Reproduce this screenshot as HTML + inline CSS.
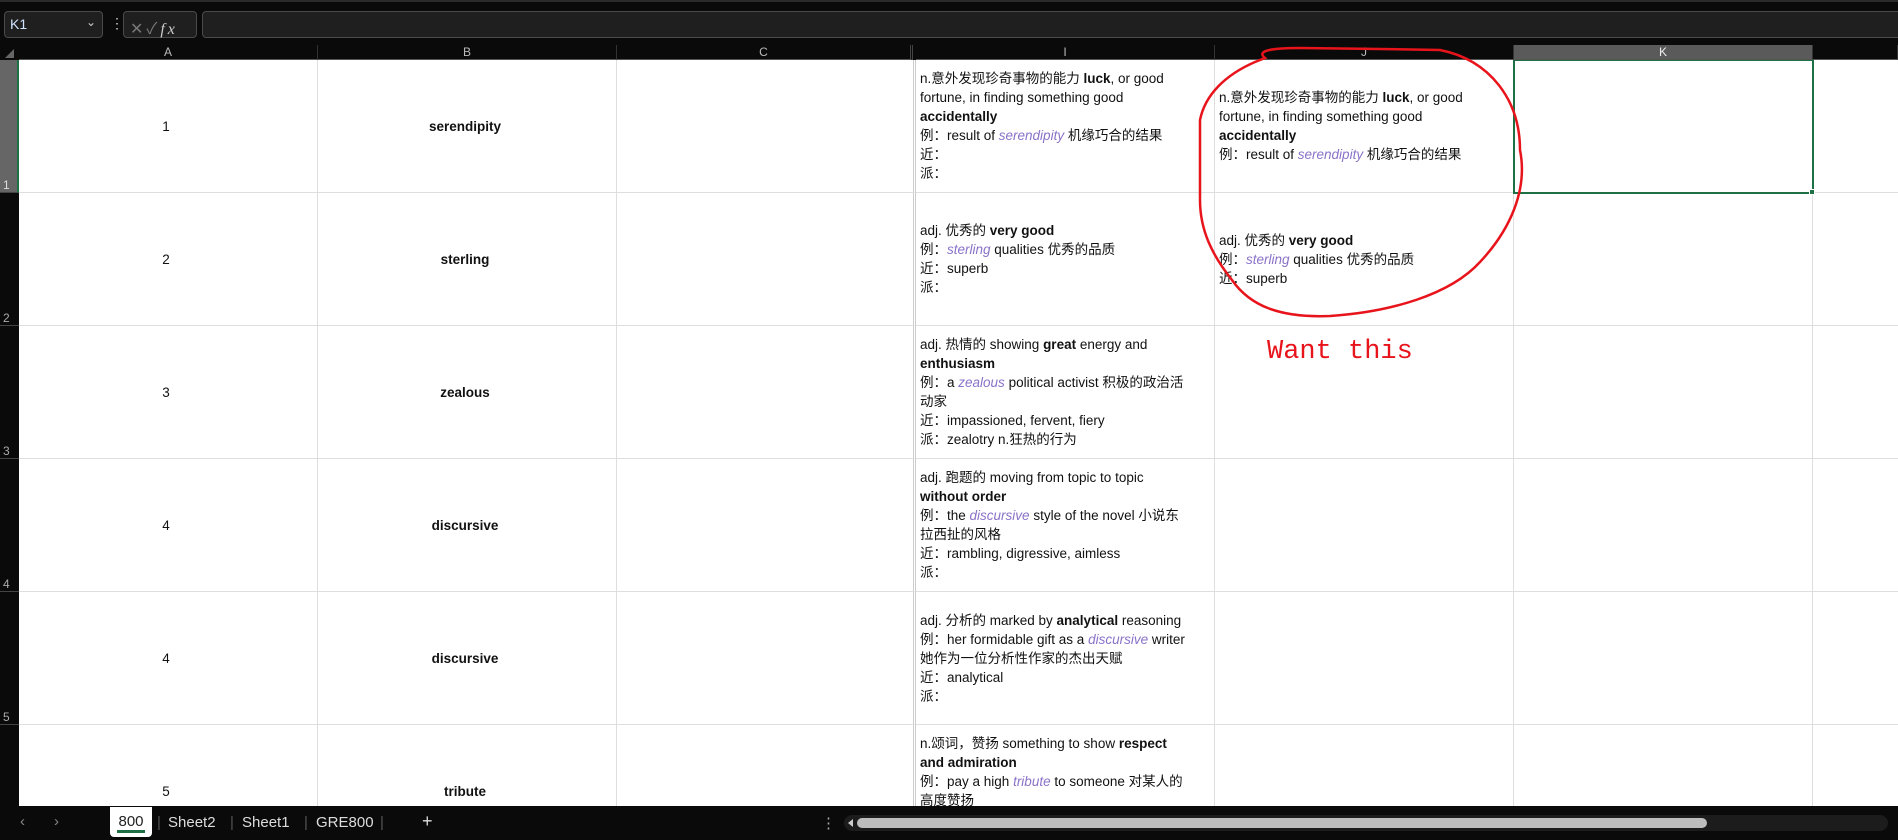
<!DOCTYPE html>
<html><head><meta charset="utf-8"><style>
*{margin:0;padding:0;box-sizing:border-box}
body{width:1898px;height:840px;background:#0a0a0a;overflow:hidden;position:relative;font-family:"Liberation Sans","Noto Sans CJK SC",sans-serif}
.abs{position:absolute}
.top{left:0;top:0;width:1898px;height:42px;background:#0a0a0a;border-top:2px solid #2a2a2a}
.box{border:1px solid #4a4a4a;border-radius:4px;background:#1f1f1f}
.hdr{top:45px;height:15px;background:#0a0a0a;color:#bbb;font-size:12px;text-align:center;line-height:15px;border-right:1px solid #333;border-bottom:1px solid #555}
.grid{left:19px;top:60px;width:1879px;height:746px;background:#fff;overflow:hidden}
.rowh{left:0;width:19px;background:#0a0a0a;color:#aaa;font-size:12px;border-bottom:1px solid #444}
.cell{position:absolute;height:133px;border-right:1px solid #dedede;border-bottom:1px solid #dedede;display:flex;flex-direction:column;justify-content:center;font-size:13.5px;line-height:19px;color:#111;padding-left:4px;padding-right:4px;overflow:hidden}
.c{align-items:center;padding-left:0}
.b{font-weight:bold}
i{color:#8a72c8}
.tabs{left:0;top:806px;width:1898px;height:34px;background:#0a0a0a;color:#ddd;font-size:15px}
</style></head><body>
<div class="abs top">
 <div class="abs box" style="left:4px;top:9px;width:99px;height:27px;color:#cfe3ff;font-size:14px;padding:4px 5px">K1<span style="position:absolute;right:6px;top:3px;color:#ccc;font-size:12px">&#8964;</span></div>
 <div class="abs" style="left:110px;top:13px;color:#ccc;font-size:14px">&#8942;</div>
 <div class="abs box" style="left:123px;top:9px;width:74px;height:27px;color:#777;font-size:16px;padding:3px 6px;letter-spacing:3px">&#10005;&#10003;<span style="font-family:'Liberation Serif',serif;font-style:italic;color:#ccc">fx</span></div>
 <div class="abs box" style="left:202px;top:9px;width:1700px;height:27px"></div>
</div>
<div class="abs" style="left:0;top:45px;width:19px;height:15px;background:#0a0a0a"><div class="abs" style="left:5px;top:4px;width:0;height:0;border-left:9px solid transparent;border-bottom:9px solid #666"></div></div>
<div class="abs hdr" style="left:19px;width:299px">A</div>
<div class="abs hdr" style="left:318px;width:299px">B</div>
<div class="abs hdr" style="left:617px;width:296px;border-right:3px double #444">C</div>
<div class="abs hdr" style="left:916px;width:299px">I</div>
<div class="abs hdr" style="left:1215px;width:299px">J</div>
<div class="abs hdr" style="left:1514px;width:299px;background:#5a5a5a;color:#eee">K</div>
<div class="abs hdr" style="left:1813px;width:85px"></div>

<div class="abs rowh" style="top:60px;height:133px;background:#666;border-right:2px solid #1e7145"><span class="abs" style="left:3px;bottom:0;color:#ddd">1</span></div>
<div class="abs rowh" style="top:193px;height:133px"><span class="abs" style="left:3px;bottom:0">2</span></div>
<div class="abs rowh" style="top:326px;height:133px"><span class="abs" style="left:3px;bottom:0">3</span></div>
<div class="abs rowh" style="top:459px;height:133px"><span class="abs" style="left:3px;bottom:0">4</span></div>
<div class="abs rowh" style="top:592px;height:133px"><span class="abs" style="left:3px;bottom:0">5</span></div>

<div class="abs grid">
 <div class="cell c" style="left:0;top:0;width:299px">1</div>
 <div class="cell c b" style="left:299px;top:0;width:299px">serendipity</div>
 <div class="cell" style="left:598px;top:0;width:299px;border-right:3px double #ccc"></div>
 <div class="cell" style="left:897px;top:0;width:299px"><div>n.意外发现珍奇事物的能力 <b>luck</b>, or good fortune, in finding something good<br><b>accidentally</b></div><div>例：result of <i>serendipity</i> 机缘巧合的结果</div><div>近：</div><div>派：</div></div>
 <div class="cell" style="left:1196px;top:0;width:299px"><div>n.意外发现珍奇事物的能力 <b>luck</b>, or good fortune, in finding something good<br><b>accidentally</b></div><div>例：result of <i>serendipity</i> 机缘巧合的结果</div></div>
 <div class="cell" style="left:1495px;top:0;width:299px"></div>
 <div class="cell" style="left:1794px;top:0;width:100px"></div>
 <div class="cell c" style="left:0;top:133px;width:299px">2</div>
 <div class="cell c b" style="left:299px;top:133px;width:299px">sterling</div>
 <div class="cell" style="left:598px;top:133px;width:299px;border-right:3px double #ccc"></div>
 <div class="cell" style="left:897px;top:133px;width:299px"><div>adj. 优秀的 <b>very good</b></div><div>例：<i>sterling</i> qualities 优秀的品质</div><div>近：superb</div><div>派：</div></div>
 <div class="cell" style="left:1196px;top:133px;width:299px"><div>adj. 优秀的 <b>very good</b></div><div>例：<i>sterling</i> qualities 优秀的品质</div><div>近：superb</div></div>
 <div class="cell" style="left:1495px;top:133px;width:299px"></div>
 <div class="cell" style="left:1794px;top:133px;width:100px"></div>
 <div class="cell c" style="left:0;top:266px;width:299px">3</div>
 <div class="cell c b" style="left:299px;top:266px;width:299px">zealous</div>
 <div class="cell" style="left:598px;top:266px;width:299px;border-right:3px double #ccc"></div>
 <div class="cell" style="left:897px;top:266px;width:299px"><div>adj. 热情的 showing <b>great</b> energy and<br><b>enthusiasm</b></div><div>例：a <i>zealous</i> political activist 积极的政治活<br>动家</div><div>近：impassioned, fervent, fiery</div><div>派：zealotry n.狂热的行为</div></div>
 <div class="cell" style="left:1196px;top:266px;width:299px"></div>
 <div class="cell" style="left:1495px;top:266px;width:299px"></div>
 <div class="cell" style="left:1794px;top:266px;width:100px"></div>
 <div class="cell c" style="left:0;top:399px;width:299px">4</div>
 <div class="cell c b" style="left:299px;top:399px;width:299px">discursive</div>
 <div class="cell" style="left:598px;top:399px;width:299px;border-right:3px double #ccc"></div>
 <div class="cell" style="left:897px;top:399px;width:299px"><div>adj. 跑题的 moving from topic to topic<br><b>without order</b></div><div>例：the <i>discursive</i> style of the novel 小说东<br>拉西扯的风格</div><div>近：rambling, digressive, aimless</div><div>派：</div></div>
 <div class="cell" style="left:1196px;top:399px;width:299px"></div>
 <div class="cell" style="left:1495px;top:399px;width:299px"></div>
 <div class="cell" style="left:1794px;top:399px;width:100px"></div>
 <div class="cell c" style="left:0;top:532px;width:299px">4</div>
 <div class="cell c b" style="left:299px;top:532px;width:299px">discursive</div>
 <div class="cell" style="left:598px;top:532px;width:299px;border-right:3px double #ccc"></div>
 <div class="cell" style="left:897px;top:532px;width:299px"><div>adj. 分析的 marked by <b>analytical</b> reasoning</div><div>例：her formidable gift as a <i>discursive</i> writer<br>她作为一位分析性作家的杰出天赋</div><div>近：analytical</div><div>派：</div></div>
 <div class="cell" style="left:1196px;top:532px;width:299px"></div>
 <div class="cell" style="left:1495px;top:532px;width:299px"></div>
 <div class="cell" style="left:1794px;top:532px;width:100px"></div>
 <div class="cell c" style="left:0;top:665px;width:299px">5</div>
 <div class="cell c b" style="left:299px;top:665px;width:299px">tribute</div>
 <div class="cell" style="left:598px;top:665px;width:299px;border-right:3px double #ccc"></div>
 <div class="cell" style="left:897px;top:665px;width:299px"><div>n.颂词，赞扬 something to show <b>respect</b><br><b>and admiration</b></div><div>例：pay a high <i>tribute</i> to someone 对某人的<br>高度赞扬</div><div>近：eulogy, praise</div><div>派：</div></div>
 <div class="cell" style="left:1196px;top:665px;width:299px"></div>
 <div class="cell" style="left:1495px;top:665px;width:299px"></div>
 <div class="cell" style="left:1794px;top:665px;width:100px"></div>
 <div class="abs" style="left:1494px;top:-1px;width:301px;height:135px;border:2px solid #1e7145"></div>
 <div class="abs" style="left:1790px;top:129px;width:6px;height:6px;background:#1e7145;border:1px solid #fff"></div>
</div>

<svg class="abs" style="left:0;top:0" width="1898" height="840">
 <path d="M1265 58 C1255 50 1275 48 1300 48 L1380 49 L1440 50 C1490 60 1520 100 1520 150 C1528 190 1510 230 1480 262 C1450 295 1390 312 1330 316 C1280 318 1250 306 1232 280 C1212 255 1200 230 1200 200 L1200 120 C1205 95 1225 75 1255 62 Z" fill="none" stroke="#e8141c" stroke-width="2.5"/>
 <text x="1267" y="358" font-family="Liberation Mono, monospace" font-size="27" fill="#e8141c">Want this</text>
</svg>

<div class="abs tabs">
 <span class="abs" style="left:20px;top:7px;color:#888">&#8249;</span>
 <span class="abs" style="left:54px;top:7px;color:#888">&#8250;</span>
 <div class="abs" style="left:110px;top:1px;width:42px;height:30px;background:#fff;color:#222;border-radius:0 0 4px 4px;text-align:center;padding-top:6px">800<div style="position:absolute;left:7px;right:7px;bottom:4px;height:3px;background:#1e7145"></div></div>
 <span class="abs" style="left:157px;top:8px;color:#555">|</span>
 <span class="abs" style="left:168px;top:8px">Sheet2</span>
 <span class="abs" style="left:230px;top:8px;color:#555">|</span>
 <span class="abs" style="left:242px;top:8px">Sheet1</span>
 <span class="abs" style="left:304px;top:8px;color:#555">|</span>
 <span class="abs" style="left:316px;top:8px">GRE800</span>
 <span class="abs" style="left:380px;top:8px;color:#555">|</span>
 <span class="abs" style="left:422px;top:5px;font-size:18px">+</span>
 <span class="abs" style="left:821px;top:8px;color:#aaa">&#8942;</span>
 <div class="abs" style="left:844px;top:9px;width:1044px;height:16px;background:#1c1c1c;border-radius:8px"></div>
 <div class="abs" style="left:848px;top:13px;width:0;height:0;border-top:4px solid transparent;border-bottom:4px solid transparent;border-right:5px solid #ccc"></div>
 <div class="abs" style="left:857px;top:12px;width:850px;height:10px;background:#bdbdbd;border-radius:5px"></div>
</div>
</body></html>
